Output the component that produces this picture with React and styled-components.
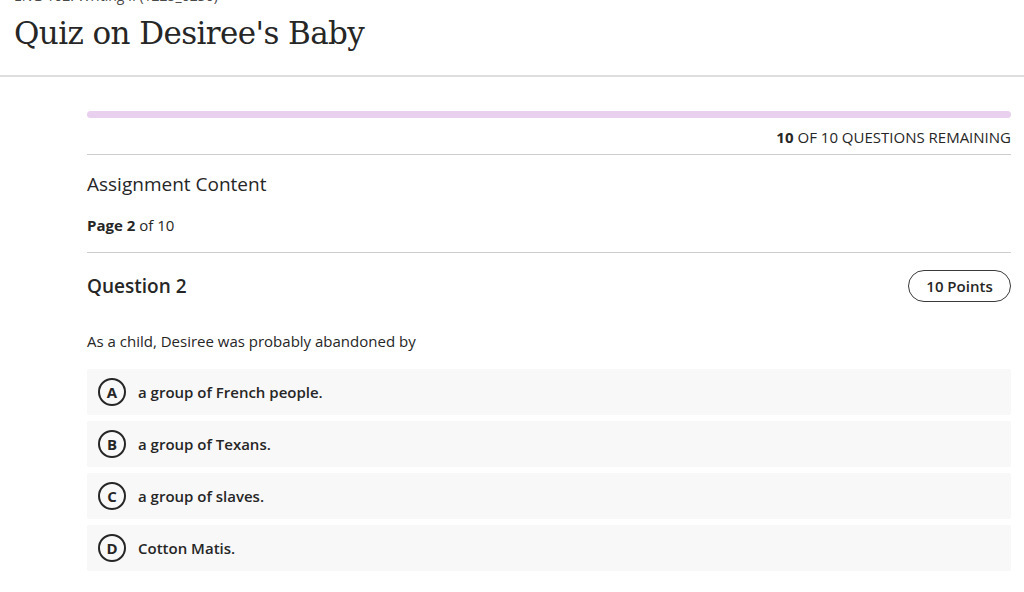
import React from "react";
import styled, { createGlobalStyle } from "styled-components";

const GlobalStyle = createGlobalStyle`
  html, body {
    margin: 0;
    padding: 0;
    background: #ffffff;
    color: #262626;
    font-family: "Open Sans", "Noto Sans", Arial, sans-serif;
  }
`;

const StyledHeader = styled.header`
  height: 75px;
  overflow: hidden;
  border-bottom: 2px solid #dedede;
  padding: 0 14px;
`;

const StyledCrumb = styled.div`
  margin-top: -12px;
  height: 16px;
  font-size: 14px;
  line-height: 16px;
  color: #4a4a4a;
`;

const StyledTitle = styled.h1`
  margin: 11px 0 0;
  font-family: "DejaVu Serif", "Liberation Serif", serif;
  font-weight: 400;
  font-size: 31px;
  line-height: 36px;
  color: #262626;
  letter-spacing: -0.6px;
`;

const StyledMain = styled.main`
  padding: 34px 13px 0 87px;
`;

const StyledProgress = styled.div`
  height: 7px;
  border-radius: 4px;
  background: #e8d0ee;
`;

const StyledRemaining = styled.div`
  display: flex;
  justify-content: flex-end;
  gap: 4px;
  padding: 9px 0 7px;
  font-size: 15px;
  line-height: 20px;
  text-transform: uppercase;
  color: #262626;
  border-bottom: 1px solid #cdcdcd;
`;

const StyledContent = styled.section`
  padding: 16px 0 17px;
  border-bottom: 1px solid #cdcdcd;
`;

const StyledSectionTitle = styled.h2`
  margin: 0;
  font-size: 19px;
  line-height: 26px;
  font-weight: 400;
  color: #262626;
`;

const StyledPage = styled.p`
  margin: 18px 0 0;
  font-size: 15px;
  line-height: 20px;
`;

const StyledQuestionHead = styled.div`
  display: flex;
  justify-content: space-between;
  align-items: center;
  padding-top: 17px;
`;

const StyledQuestionTitle = styled.h3`
  margin: 0;
  font-size: 19px;
  line-height: 26px;
  font-weight: 600;
`;

const StyledPoints = styled.span`
  box-sizing: border-box;
  display: inline-flex;
  align-items: center;
  justify-content: center;
  width: 103px;
  height: 32px;
  border: 1px solid #3a3a3a;
  border-radius: 16px;
  font-size: 15px;
  font-weight: 600;
`;

const StyledPrompt = styled.p`
  margin: 29px 0 0;
  font-size: 15px;
  line-height: 20px;
`;

const StyledOptions = styled.ul`
  list-style: none;
  margin: 18px 0 0;
  padding: 0;
  display: flex;
  flex-direction: column;
  gap: 6px;
`;

const StyledOption = styled.li`
  display: flex;
  align-items: center;
  gap: 12px;
  height: 46px;
  padding: 0 11px;
  background: #f8f8f8;
  border-radius: 2px;
  font-size: 15px;
  font-weight: 600;
  color: #262626;
`;

const StyledLetter = styled.span`
  box-sizing: border-box;
  display: inline-flex;
  align-items: center;
  justify-content: center;
  width: 28px;
  height: 28px;
  border: 2px solid #262626;
  border-radius: 50%;
  font-size: 15px;
  font-weight: 700;
`;

const options = [
  { letter: "A", text: "a group of French people." },
  { letter: "B", text: "a group of Texans." },
  { letter: "C", text: "a group of slaves." },
  { letter: "D", text: "Cotton Matis." },
];

export default function App() {
  return (
    <>
      <GlobalStyle />
      <StyledHeader>
        <StyledCrumb>ENG 102: Writing II (1225_0230)</StyledCrumb>
        <StyledTitle>Quiz on Desiree's Baby</StyledTitle>
      </StyledHeader>
      <StyledMain>
        <StyledProgress />
        <StyledRemaining>
          <strong>10</strong> of 10 questions remaining
        </StyledRemaining>
        <StyledContent>
          <StyledSectionTitle>Assignment Content</StyledSectionTitle>
          <StyledPage>
            <strong>Page 2</strong> of 10
          </StyledPage>
        </StyledContent>
        <StyledQuestionHead>
          <StyledQuestionTitle>Question 2</StyledQuestionTitle>
          <StyledPoints>10 Points</StyledPoints>
        </StyledQuestionHead>
        <StyledPrompt>As a child, Desiree was probably abandoned by</StyledPrompt>
        <StyledOptions>
          {options.map((option) => (
            <StyledOption key={option.letter}>
              <StyledLetter>{option.letter}</StyledLetter>
              {option.text}
            </StyledOption>
          ))}
        </StyledOptions>
      </StyledMain>
    </>
  );
}
